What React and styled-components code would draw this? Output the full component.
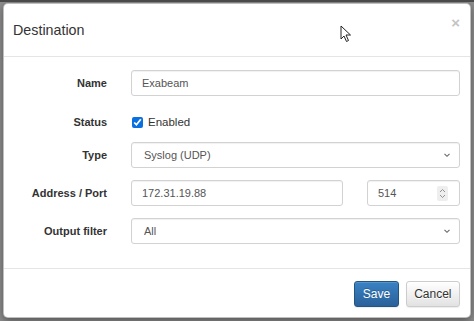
import React from 'react';
import styled, { createGlobalStyle } from 'styled-components';

const GlobalStyle = createGlobalStyle`
  html, body {
    margin: 0;
    padding: 0;
    width: 474px;
    height: 321px;
    overflow: hidden;
    background: #8d8d8d;
  }
  body {
    border-top: 2px solid #4a4a4a;
    box-sizing: border-box;
    font-family: "Liberation Sans", Arial, sans-serif;
  }
`;

const Backdrop = styled.div`
  position: relative;
  padding: 1px 3px 3px 3px;
  height: 319px;
  box-sizing: border-box;
`;

const Modal = styled.section`
  display: flex;
  flex-direction: column;
  height: 100%;
  box-sizing: border-box;
  background: #fff;
  border: 1px solid rgba(0, 0, 0, 0.25);
  border-radius: 5px;
  box-shadow: 0 3px 9px rgba(0, 0, 0, 0.4);
  color: #333;
`;

const Header = styled.header`
  display: flex;
  align-items: flex-start;
  justify-content: space-between;
  height: 53px;
  box-sizing: border-box;
  padding: 16px 10px 0 9px;
  border-bottom: 1px solid #e5e5e5;
`;

const Title = styled.h4`
  margin: 0;
  font-size: 14.3px;
  font-weight: normal;
  line-height: 20px;
  color: #333;
`;

const Close = styled.button`
  border: 0;
  background: none;
  padding: 0;
  margin-top: -7px;
  font-family: "Liberation Sans", Arial, sans-serif;
  font-size: 15px;
  font-weight: bold;
  line-height: 20px;
  color: #c4c4c4;
`;

const Body = styled.form`
  display: grid;
  grid-template-columns: 93px 1fr;
  column-gap: 24px;
  row-gap: 12px;
  align-items: center;
  padding: 13px 10px 24px 10px;
  border-bottom: 1px solid #e5e5e5;
`;

const Label = styled.label`
  text-align: right;
  font-size: 11px;
  font-weight: bold;
  color: #333;
`;

const Box = styled.div`
  display: flex;
  align-items: center;
  height: 26px;
  box-sizing: border-box;
  padding: 0 ${(p) => p.$pr || 10}px 0 10px;
  border: 1px solid #d2d2d2;
  border-radius: 3px;
  box-shadow: inset 0 1px 1px rgba(0, 0, 0, 0.06);
  background: #fff;
  font-size: 11px;
  color: #555;
`;

const Field = styled.input`
  flex: 1;
  min-width: 0;
  border: 0;
  outline: 0;
  padding: 0;
  background: transparent;
  font-family: "Liberation Sans", Arial, sans-serif;
  font-size: 11px;
  color: #555;
`;

const Select = styled.select`
  flex: 1;
  min-width: 0;
  border: 0;
  outline: 0;
  padding: 0 0 0 2px;
  background: transparent;
  appearance: none;
  font-family: "Liberation Sans", Arial, sans-serif;
  font-size: 11px;
  color: #555;
`;

const Check = styled.div`
  display: flex;
  align-items: center;
  gap: 5px;
  height: 22px;
  padding-top: 3px;
  margin-bottom: -3px;
  font-size: 11.5px;
  color: #333;

  input {
    margin: 0 0 0 1px;
    width: 11px;
    height: 11px;
    accent-color: #0a6fe0;
  }
`;

const StatusLabel = styled(Label)`
  padding-top: 3px;
  margin-bottom: -3px;
`;

const Pair = styled.div`
  display: grid;
  grid-template-columns: 1fr 93px;
  column-gap: 24px;
`;

const Spinner = styled.span`
  display: flex;
  align-items: center;
  justify-content: center;
  width: 11px;
  height: 15px;
  background: #eeeeee;
  border-radius: 2px;
`;

const Footer = styled.footer`
  display: flex;
  justify-content: flex-end;
  gap: 7px;
  padding: 12px 10px 0 0;
`;

const Button = styled.button`
  height: 26px;
  padding: 0 7.5px;
  border-radius: 3px;
  font-family: "Liberation Sans", Arial, sans-serif;
  font-size: 12px;
  border: 1px solid ${(p) => (p.$primary ? '#245580' : '#cccccc')};
  color: ${(p) => (p.$primary ? '#fff' : '#333')};
  background: ${(p) =>
    p.$primary
      ? 'linear-gradient(to bottom, #3a82c4 0%, #2a619a 100%)'
      : 'linear-gradient(to bottom, #ffffff 0%, #e2e2e2 100%)'};
  text-shadow: ${(p) => (p.$primary ? '0 -1px 0 rgba(0,0,0,.2)' : '0 1px 0 #fff')};
  box-shadow: inset 0 1px 0 rgba(255, 255, 255, 0.15), 0 1px 1px rgba(0, 0, 0, 0.075);
`;

const Cursor = styled.svg`
  position: absolute;
  left: 340px;
  top: 23px;
`;

const Chevron = () => (
  <svg width="8" height="6" viewBox="0 0 8 6">
    <path d="M1.5 1.8 L4 4.3 L6.5 1.8" fill="none" stroke="#666" strokeWidth="1.1" />
  </svg>
);

const App = () => (
  <Backdrop>
    <GlobalStyle />
    <Modal>
      <Header>
        <Title>Destination</Title>
        <Close type="button">×</Close>
      </Header>
      <Body>
        <Label>Name</Label>
        <Box>
          <Field defaultValue="Exabeam" />
        </Box>

        <StatusLabel>Status</StatusLabel>
        <Check>
          <input type="checkbox" defaultChecked />
          <span>Enabled</span>
        </Check>

        <Label>Type</Label>
        <Box $pr={8}>
          <Select defaultValue="udp">
            <option value="udp">Syslog (UDP)</option>
          </Select>
          <Chevron />
        </Box>

        <Label>Address / Port</Label>
        <Pair>
          <Box>
            <Field defaultValue="172.31.19.88" />
          </Box>
          <Box $pr={11}>
            <Field defaultValue="514" />
            <Spinner>
              <svg width="7" height="11" viewBox="0 0 7 11">
                <path d="M1 4 L3.5 1.5 L6 4 M1 7 L3.5 9.5 L6 7" fill="none" stroke="#888" strokeWidth="0.9" />
              </svg>
            </Spinner>
          </Box>
        </Pair>

        <Label>Output filter</Label>
        <Box $pr={8}>
          <Select defaultValue="all">
            <option value="all">All</option>
          </Select>
          <Chevron />
        </Box>
      </Body>
      <Footer>
        <Button type="button" $primary>Save</Button>
        <Button type="button">Cancel</Button>
      </Footer>
    </Modal>
    <Cursor width="12" height="18" viewBox="0 0 12 18">
      <path d="M1 1 L1 14 L4 11 L6.5 16.5 L8.5 15.5 L6 10 L10.5 10 Z" fill="#fff" stroke="#222" strokeWidth="1" strokeLinejoin="round" />
    </Cursor>
  </Backdrop>
);

export default App;
